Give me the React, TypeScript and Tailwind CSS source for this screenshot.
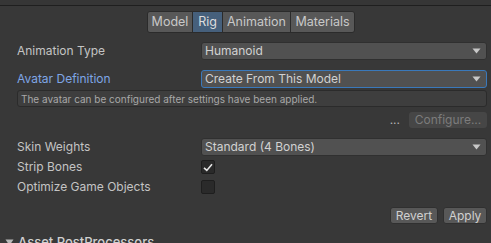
import React from "react";

const Arrow = () => (
  <svg width="9" height="6" viewBox="0 0 9 6" className="shrink-0">
    <path d="M0.5 0.5 L8.5 0.5 L4.5 5.5 Z" fill="#c8c8c8" />
  </svg>
);

const Dropdown = ({ value, focused = false }: { value: string; focused?: boolean }) => (
  <div
    className={
      focused
        ? "flex h-[18px] w-[286px] items-center justify-between rounded-[3px] border border-[#3a79bb] bg-[#515151] pl-[3px] pr-[5px]"
        : "flex h-[18px] w-[286px] items-center justify-between rounded-[3px] border border-[#303030] bg-[#515151] pl-[3px] pr-[5px]"
    }
  >
    <span className="text-[12px] leading-none text-[#d2d2d2]">{value}</span>
    <Arrow />
  </div>
);

const Label = ({ children, blue = false }: { children: React.ReactNode; blue?: boolean }) => (
  <div className={blue ? "w-[184px] text-[12px] leading-none text-[#7fa6e6]" : "w-[184px] text-[12px] leading-none text-[#c4c4c4]"}>
    {children}
  </div>
);

const Check = ({ checked }: { checked: boolean }) => (
  <div className="flex h-[14px] w-[14px] items-center justify-center rounded-[2px] border border-[#1e1e1e] bg-[#2a2a2a]">
    {checked && (
      <svg width="10" height="9" viewBox="0 0 10 9">
        <path d="M1 4.8 L3.8 7.4 L9 1.2" stroke="#e6e6e6" strokeWidth="1.6" fill="none" />
      </svg>
    )}
  </div>
);

export default function App() {
  return (
    <div
      className="relative h-[243px] w-[491px] overflow-hidden bg-[#383838]"
      style={{ fontFamily: "Inter, 'Noto Sans', sans-serif" }}
    >
      <div className="h-[5px] bg-[#363636]" />
      <div className="h-[1px] bg-[#1f1f1f]" />
      {/* tabs */}
      <div className="mt-[5px] flex pl-[147px]">
        <div className="flex h-[22px] overflow-hidden rounded-[3px] border border-[#2b2b2b] text-[12.5px] leading-none text-[#c8c8c8]">
          <div className="flex w-[44px] items-center justify-center bg-[#585858]">Model</div>
          <div className="flex w-[30px] items-center justify-center border-l border-[#2b2b2b] bg-[#46607c] text-[#dcdcdc]">Rig</div>
          <div className="flex w-[68px] items-center justify-center border-l border-[#2b2b2b] bg-[#585858]">Animation</div>
          <div className="flex w-[64px] items-center justify-center border-l border-[#2b2b2b] bg-[#585858]">Materials</div>
        </div>
      </div>

      <div className="pl-[17px] pr-[4px]">
        <div className="mt-[9px] flex h-[18px] items-center">
          <Label>Animation Type</Label>
          <Dropdown value="Humanoid" />
        </div>
        <div className="mt-[10px] flex h-[18px] items-center">
          <Label blue>Avatar Definition</Label>
          <Dropdown value="Create From This Model" focused />
        </div>
        <div className="mt-[2px] flex h-[17px] items-center rounded-[3px] border border-[#2b2b2b] bg-[#3e3e3e] pl-[3px] text-[10px] leading-none text-[#a8a8a8]">
          The avatar can be configured after settings have been applied.
        </div>
        <div className="mt-[5px] flex h-[16px] items-center justify-end">
          <span className="mr-[9px] text-[12px] leading-none text-[#b4b4b4]">...</span>
          <div className="flex h-[16px] w-[78px] items-center justify-center rounded-[3px] bg-[#464646] text-[12px] leading-none text-[#7c7c7c]">
            Configure...
          </div>
        </div>
        <div className="mt-[10px] flex h-[18px] items-center">
          <Label>Skin Weights</Label>
          <Dropdown value="Standard (4 Bones)" />
        </div>
        <div className="mt-[2px] flex h-[18px] items-center">
          <Label>Strip Bones</Label>
          <Check checked />
        </div>
        <div className="mt-[2px] flex h-[18px] items-center">
          <Label>Optimize Game Objects</Label>
          <Check checked={false} />
        </div>
        <div className="mt-[11px] flex justify-end gap-[5px]">
          <div className="flex h-[17px] w-[48px] items-center justify-center rounded-[3px] border border-[#303030] bg-[#585858] text-[12px] leading-none text-[#d0d0d0]">
            Revert
          </div>
          <div className="flex h-[17px] w-[44px] items-center justify-center rounded-[3px] border border-[#303030] bg-[#585858] text-[12px] leading-none text-[#d0d0d0]">
            Apply
          </div>
        </div>
      </div>
      <div className="mt-[12px] flex items-center pl-[5px]">
        <svg width="9" height="7" viewBox="0 0 9 7" className="mr-[4px]">
          <path d="M0.5 0.5 L8.5 0.5 L4.5 6.5 Z" fill="#b8b8b8" />
        </svg>
        <span className="text-[13px] font-medium leading-none text-[#d0d0d0]">Asset PostProcessors</span>
      </div>
    </div>
  );
}
